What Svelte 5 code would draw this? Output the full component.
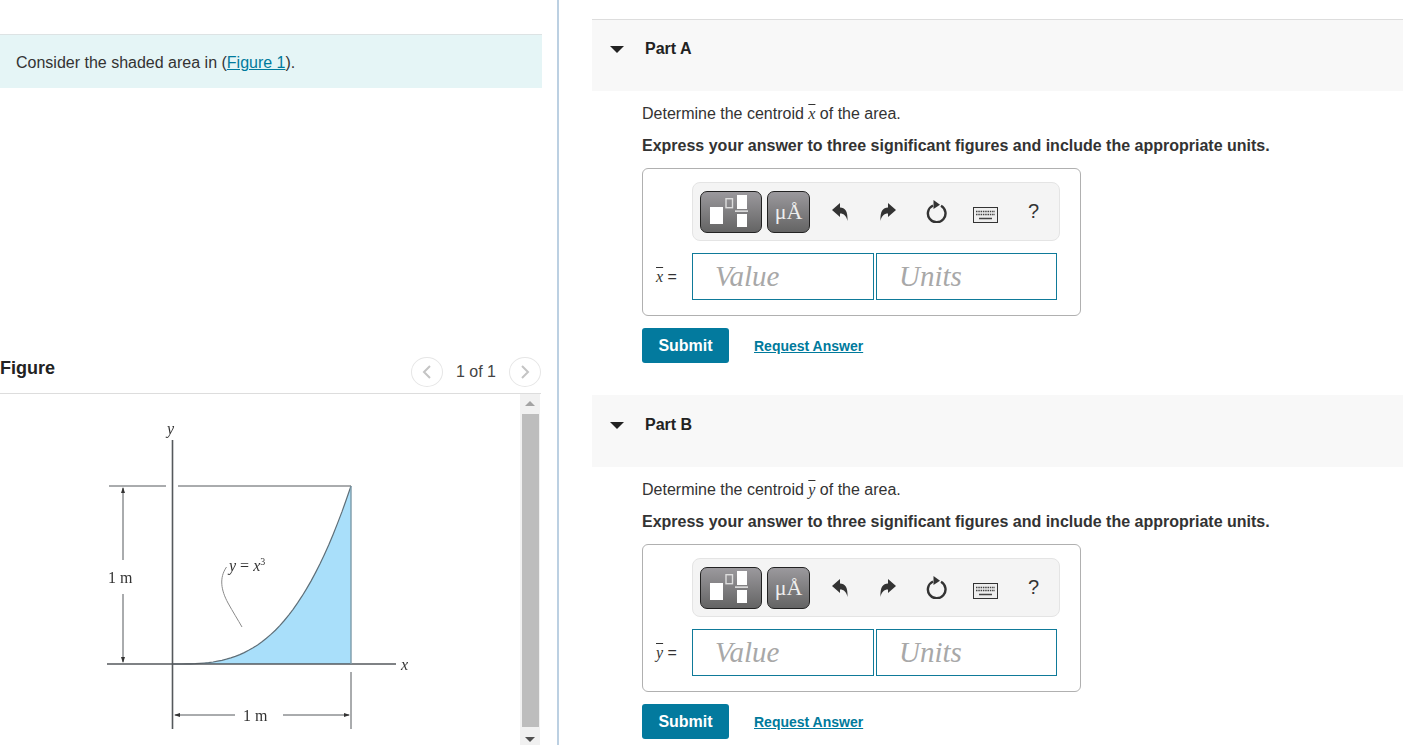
<script>
  const parts = [
    { name: 'Part A', sym: 'x' },
    { name: 'Part B', sym: 'y' }
  ];

  // y = x^3 over the 1 m square of the figure
  const curve = [];
  for (let i = 0; i <= 40; i++) {
    const t = i / 40;
    curve.push(`${(173 + 178 * t).toFixed(1)},${(664 - 178 * t * t * t).toFixed(1)}`);
  }
  const curveLine = curve.join(' ');
  const shaded = `${curveLine} 351,664`;
</script>

<div class="page">
  <div class="left">
    <div class="intro">Consider the shaded area in (<a href="#fig">Figure 1</a>).</div>

    <div class="fig-head">
      <h2>Figure</h2>
      <div class="pager">
        <span class="pager__btn">
          <svg width="10" height="14" viewBox="0 0 10 14"><path d="M8 1 2 7l6 6" /></svg>
        </span>
        <span class="pager__count">1 of 1</span>
        <span class="pager__btn">
          <svg width="10" height="14" viewBox="0 0 10 14"><path d="M2 1l6 6-6 6" /></svg>
        </span>
      </div>
    </div>

    <div class="fig-body">
      <svg class="figure" width="520" height="351" viewBox="0 394 520 351">
        <polygon points={shaded} fill="#a9dffa" />
        <polyline points={curveLine} fill="none" stroke="#5f6f78" stroke-width="1.2" />
        <g stroke="#55595c" fill="none">
          <path d="M172.5 440V729" stroke-width="1.6" />
          <path d="M107 664H396" stroke-width="1.5" />
          <path d="M109 486H166M178 486H351" stroke-width="1" />
          <path d="M351 486V664" stroke="#7d9aa8" stroke-width="1.4" />
          <path d="M351 672V729" stroke-width="1" />
          <path d="M123 488V560M123 594V662" stroke-width="1" />
          <path d="M175 715H235M283 715H349" stroke-width="1" />
          <path d="M226.5 567C219 578 221 590 228 603C233 612 238 620 242 627" stroke="#8a8a8a" stroke-width="1" />
        </g>
        <g fill="#333">
          <path d="M123 487l-2 6h4zM123 663l-2-6h4zM174 715l6-2v4zM350 715l-6-2v4z" />
          <text class="fig-label" x="108" y="583">1 m</text>
          <text class="fig-label" x="243" y="721">1 m</text>
          <text class="fig-label fig-label--it" x="167" y="434">y</text>
          <text class="fig-label fig-label--it" x="401" y="670">x</text>
          <text class="fig-label" x="229" y="571"><tspan font-style="italic">y</tspan> = <tspan font-style="italic">x</tspan><tspan class="fig-sup" dy="-6">3</tspan></text>
        </g>
      </svg>

      <div class="scrollbar">
        <span class="scrollbar__up"></span>
        <span class="scrollbar__thumb"></span>
        <span class="scrollbar__down"></span>
      </div>
    </div>
  </div>

  <div class="right">
    {#each parts as part}
      <section class="part">
        <header class="part__head">
          <span class="caret"></span>
          <h3>{part.name}</h3>
        </header>

        <div class="part__body">
          <p class="prompt">Determine the centroid <span class="sym">{part.sym}</span> of the area.</p>
          <p class="instr">Express your answer to three significant figures and include the appropriate units.</p>

          <div class="answer">
            <div class="toolbar">
              <span class="tool tool--frac">
                <svg width="44" height="34" viewBox="0 0 44 34">
                  <rect x="1" y="12" width="13" height="17" fill="#fff" />
                  <rect x="17" y="3.7" width="6.5" height="9" fill="none" stroke="#ddd" stroke-width="1.4" />
                  <rect x="28" y="0" width="10" height="14" fill="#fff" />
                  <rect x="26" y="15.5" width="13" height="1.2" fill="#fff" />
                  <rect x="28" y="19" width="10" height="13" fill="#fff" />
                </svg>
              </span>
              <span class="tool tool--unit">μÅ</span>

              <svg class="ico ico--undo" width="16" height="18" viewBox="0 0 16 18"><path d="M0 7 8 0v4.5c5 0 8 3.500 7.500 13.500-1-5-3.500-7.500-7.500-7.500V14z" /></svg>
              <svg class="ico ico--redo" width="16" height="18" viewBox="0 0 16 18"><path d="M16 7 8 0v4.500C3 4.500 0 8 .5 18c1-5 3.500-7.500 7.500-7.500V14z" /></svg>
              <svg class="ico ico--reset" width="22" height="23" viewBox="0 0 22 23">
                <path d="M7 5.500a8.800 8.800 0 1 0 8 .3" fill="none" stroke="#333" stroke-width="2.400" />
                <path d="M7.500 0l6.500 4.700-6.500 4.300z" fill="#333" />
              </svg>
              <svg class="ico ico--keys" width="25" height="16" viewBox="0 0 25 16">
                <rect x=".5" y=".5" width="24" height="15" fill="#eee" stroke="#333" />
                <path d="M3 4.500h19M3 7.500h19" stroke="#444" stroke-width="1.500" stroke-dasharray="1.500 .8" />
                <path d="M6 11.500h13" stroke="#444" stroke-width="1.500" />
              </svg>
              <span class="tool-help">?</span>
            </div>

            <div class="fields">
              <span class="eq"><span class="sym">{part.sym}</span> =</span>
              <input class="field field--value" placeholder="Value" aria-label="Value" />
              <input class="field field--units" placeholder="Units" aria-label="Units" />
            </div>
          </div>

          <div class="actions">
            <button class="submit" type="button">Submit</button>
            <a class="request" href="#answer">Request Answer</a>
          </div>
        </div>
      </section>
    {/each}
  </div>
</div>

<style>
  :global(body) {
    margin: 0;
    background: #fff;
  }

  .page {
    display: flex;
    height: 745px;
    overflow: hidden;
    font-family: 'Liberation Sans', Arial, sans-serif;
    font-size: 16px;
    color: #333;
  }

  /* Columna izquierda */
  .left {
    flex: none;
    width: 557px;
    padding-top: 34px;
    box-sizing: border-box;
    border-right: 2px solid #bcd0e2;
    width: 559px;
  }

  .intro {
    width: 542px;
    height: 54px;
    box-sizing: border-box;
    padding: 18px 0 0 16px;
    line-height: 19px;
    background: #e5f5f6;
    border-top: 1px solid #dde3e4;
  }

  .intro a,
  .request {
    color: #007a9c;
  }

  .fig-head {
    display: flex;
    align-items: center;
    justify-content: space-between;
    width: 542px;
    height: 48px;
    margin-top: 257px;
    box-sizing: border-box;
    padding: 5px 1px 0 0;
    border-bottom: 0;
  }

  .fig-head h2 {
    margin: 0 0 6px;
    font-size: 18px;
    font-weight: 700;
    color: #222;
  }

  .pager {
    display: flex;
    align-items: center;
    gap: 13px;
    margin-top: 1px;
  }

  .pager__btn {
    display: grid;
    place-items: center;
    width: 30px;
    height: 28px;
    border: 1px solid #e6e6e6;
    border-radius: 50%;
  }

  .pager__btn path {
    fill: none;
    stroke: #c4c4c4;
    stroke-width: 2;
  }

  .pager__count {
    color: #444;
  }

  .fig-body {
    display: flex;
    width: 541px;
    height: 352px;
    border-top: 1px solid #ddd;
  }

  .figure {
    display: block;
    flex: none;
    filter: blur(0.3px);
  }

  .fig-label {
    font-family: 'Liberation Serif', 'Times New Roman', serif;
    font-size: 16px;
  }

  .fig-label--it {
    font-style: italic;
  }

  .fig-sup {
    font-size: 10px;
  }

  .scrollbar {
    display: flex;
    flex-direction: column;
    align-items: center;
    width: 20px;
    background: #f1f1f1;
  }

  .scrollbar__up,
  .scrollbar__down {
    flex: none;
    width: 0;
    height: 0;
    border-left: 5px solid transparent;
    border-right: 5px solid transparent;
  }

  .scrollbar__up {
    margin: 7px 0 8px;
    border-bottom: 5px solid #a3a3a3;
  }

  .scrollbar__thumb {
    flex: 1;
    width: 17px;
    background: #bdbdbd;
  }

  .scrollbar__down {
    margin: 10px 0 4px;
    border-top: 5px solid #505050;
  }

  /* Columna derecha */
  .right {
    flex: 1;
    min-width: 0;
    padding: 19px 0 0 33px;
  }

  .part {
    height: 376px;
  }

  .part__head {
    display: flex;
    align-items: flex-start;
    height: 72px;
    box-sizing: border-box;
    padding: 20px 0 0 18px;
    background: #f8f8f8;
    border-top: 1px solid #ddd;
  }

  .part + .part .part__head {
    border-top-color: #f8f8f8;
  }

  .caret {
    width: 0;
    height: 0;
    margin-top: 6px;
    border-left: 7px solid transparent;
    border-right: 7px solid transparent;
    border-top: 7px solid #222;
  }

  .part__head h3 {
    margin: 0 0 0 21px;
    font-size: 16px;
    line-height: 18px;
    font-weight: 700;
    color: #222;
  }

  .part__body {
    padding: 14px 0 0 50px;
  }

  .prompt,
  .instr {
    margin: 0;
    line-height: 18px;
  }

  .instr {
    margin-top: 14px;
    font-weight: 700;
    color: #333;
  }

  .sym {
    font-family: 'Liberation Serif', 'Times New Roman', serif;
    font-style: italic;
    text-decoration: overline;
  }

  .answer {
    width: 439px;
    height: 148px;
    margin-top: 13px;
    box-sizing: border-box;
    padding: 13px 0 0 49px;
    border: 1px solid #b0b0b0;
    border-radius: 6px;
  }

  .toolbar {
    display: flex;
    align-items: center;
    width: 368px;
    height: 59px;
    box-sizing: border-box;
    padding-left: 7px;
    background: #f4f4f4;
    border: 1px solid #e4e4e4;
    border-radius: 8px;
  }

  .tool {
    display: grid;
    place-items: center;
    height: 42px;
    box-sizing: border-box;
    background: linear-gradient(#9b999d, #646464);
    border: 1px solid #222;
    border-radius: 7px;
  }

  .tool--frac {
    width: 62px;
  }

  .tool--unit {
    width: 43px;
    margin-left: 5px;
    font-family: 'Liberation Serif', 'Times New Roman', serif;
    font-size: 22px;
    color: #eee;
  }

  .ico {
    flex: none;
    display: block;
  }

  .ico path {
    fill: #333;
  }

  .ico--undo {
    margin-left: 22px;
  }

  .ico--redo {
    margin-left: 32px;
  }

  .ico--reset {
    margin-left: 30px;
  }

  .ico--keys {
    margin-left: 25px;
    margin-top: 6px;
  }

  .ico--keys path {
    fill: none;
  }

  .ico--reset path:first-child {
    fill: none;
  }

  .tool-help {
    margin-left: 30px;
    font-size: 20px;
    color: #333;
  }

  .fields {
    display: flex;
    align-items: center;
    margin-top: 12px;
    margin-left: -36px;
  }

  .eq {
    width: 36px;
    white-space: nowrap;
    color: #333;
  }

  .field {
    width: 182px;
    height: 47px;
    box-sizing: border-box;
    margin: 0;
    padding: 0 0 0 22px;
    background: #fff;
    border: 1px solid #0f7a99;
    border-radius: 0;
    outline: none;
    font-family: 'Liberation Serif', 'Times New Roman', serif;
    font-size: 29px;
    font-style: italic;
    color: #333;
  }

  .field::placeholder {
    color: #a8a8a8;
    opacity: 1;
  }

  .field--units {
    width: 181px;
    margin-left: 2px;
  }

  .actions {
    display: flex;
    align-items: center;
    gap: 25px;
    margin-top: 12px;
  }

  .submit {
    width: 87px;
    height: 35px;
    padding: 0;
    background: #037a9e;
    border: 0;
    border-radius: 3px;
    font-family: inherit;
    font-size: 16px;
    font-weight: 700;
    color: #fff;
  }

  .request {
    font-size: 14px;
    font-weight: 700;
  }
</style>
